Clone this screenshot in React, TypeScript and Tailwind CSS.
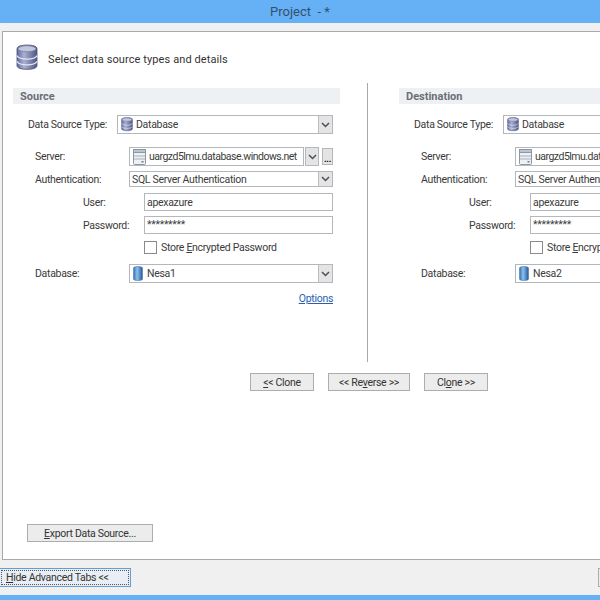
import React from "react";

const Stack = ({ size, className = "" }: { size: number; className?: string }) => (
  <svg width={size} height={size * 1.2} viewBox="0 0 22 25" preserveAspectRatio="none" className={className}>
    <defs>
      <linearGradient id="dbg" x1="0" x2="1" y1="0" y2="0">
        <stop offset="0" stopColor="#5f6aa0" />
        <stop offset="0.35" stopColor="#a9b0d2" />
        <stop offset="1" stopColor="#4d5688" />
      </linearGradient>
    </defs>
    <path d="M1 4.5C1 2 6 1 11 1s10 1 10 3.5v16c0 2.5-5 3.5-10 3.5S1 23 1 20.500z" fill="url(#dbg)" stroke="#4a5070" strokeWidth="0.8" />
    <ellipse cx="11" cy="4.500" rx="9" ry="2.800" fill="#c3c7da" stroke="#6d7398" strokeWidth="0.6" />
    <path d="M1 11c1.500 2.600 6 3.300 10 3.300s8.500-.7 10-3.300M1 16.500c1.500 2.600 6 3.300 10 3.300s8.500-.7 10-3.300" fill="none" stroke="#e4e6f0" strokeWidth="1.200" />
  </svg>
);

const ServerIcon = () => (
  <svg width="13" height="16" viewBox="0 0 13 16" className="shrink-0">
    <rect x="0.500" y="0.500" width="12" height="15" rx="1" fill="#eef1f4" stroke="#8b98a6" />
    <rect x="0.500" y="0.500" width="12" height="3" fill="#b9c4cf" stroke="#8b98a6" />
    <path d="M1 7h11M1 10h11" stroke="#a3afba" />
    <rect x="8.500" y="12" width="2" height="1.500" fill="#6c7c8c" />
  </svg>
);

const Cylinder = () => (
  <svg width="10" height="15" viewBox="0 0 10 15" className="shrink-0">
    <defs>
      <linearGradient id="cyl" x1="0" x2="1" y1="0" y2="0">
        <stop offset="0" stopColor="#2f6fb8" />
        <stop offset="0.4" stopColor="#8fc0ea" />
        <stop offset="1" stopColor="#1f5a9f" />
      </linearGradient>
    </defs>
    <path d="M0.500 2C0.500 1 2.500.5 5 .5s4.500.5 4.500 1.500v11c0 1-2 1.500-4.500 1.500S.5 14 .5 13z" fill="url(#cyl)" stroke="#3f6f9f" strokeWidth="0.500" />
  </svg>
);

const Chevron = () => (
  <svg width="9" height="6" viewBox="0 0 9 6">
    <path d="M1 1l3.500 3.500L8 1" fill="none" stroke="#4a4f55" strokeWidth="1.500" />
  </svg>
);

const Arrow = () => (
  <div className="w-[14px] self-stretch shrink-0 flex items-center justify-center bg-[#e4e4e4] border-l border-[#bcbcbc]">
    <Chevron />
  </div>
);

const Box = ({ className = "", children }: { className?: string; children?: React.ReactNode }) => (
  <div className={`flex items-center bg-white border border-[#b4b8bc] text-[#3c3c3c] overflow-hidden whitespace-nowrap ${className}`}>{children}</div>
);

const Label = ({ className = "", children }: { className?: string; children: React.ReactNode }) => (
  <span className={`shrink-0 text-[#3a3a3a] whitespace-nowrap ${className}`}>{children}</span>
);

const Panel = ({ title, db, width }: { title: string; db: string; width: string }) => (
  <div className={`${width} shrink-0 flex flex-col`}>
    <div className="h-[16px] w-full bg-[#eef0f3] pl-[7px] flex items-center font-bold text-[11px] text-[#6a6f76] tracking-[0px]">{title}</div>

    <div className="flex items-center w-full h-[19px] mt-[11px] pl-[15px]">
      <Label className="w-[89px]">Data Source Type:</Label>
      <Box className="w-[216px] h-full pl-[3px]">
        <Stack size={12} className="shrink-0" />
        <span className="ml-[3px] flex-1">Database</span>
        <Arrow />
      </Box>
    </div>

    <div className="flex items-center w-full h-[19px] mt-[13px] pl-[22px]">
      <Label className="w-[94px]">Server:</Label>
      <div className="flex items-center w-[190px] h-full gap-[1px]">
        <Box className="w-[175px] h-full pl-[3px]">
          <ServerIcon />
          <span className="ml-[3px] tracking-[-0.5px]">uargzd5lmu.database.windows.net</span>
        </Box>
        <div className="flex-1 h-full flex items-center justify-center bg-[#e4e4e4] border border-[#b4b8bc]">
          <Chevron />
        </div>
      </div>
      <div className="ml-[3px] w-[11px] h-[17px] flex items-end justify-center bg-[#e4e4e4] border border-[#b4b8bc] text-[9px] font-bold leading-[10px]">...</div>
    </div>

    <div className="flex items-center w-full h-[16px] mt-[5px] pl-[22px]">
      <Label className="w-[94px]">Authentication:</Label>
      <Box className="w-[204px] h-full pl-[2px]">
        <span className="flex-1">SQL Server Authentication</span>
        <Arrow />
      </Box>
    </div>

    <div className="flex items-center w-full h-[18px] mt-[6px] pl-[70px]">
      <Label className="w-[61px]">User:</Label>
      <Box className="w-[189px] h-full pl-[2px]">apexazure</Box>
    </div>

    <div className="flex items-center w-full h-[18px] mt-[5px] pl-[70px]">
      <Label className="w-[61px]">Password:</Label>
      <Box className="w-[189px] h-full pl-[2px] items-start pt-[1px]">*********</Box>
    </div>

    <div className="flex items-center w-full h-[13px] mt-[7px] pl-[131px]">
      <div className="w-[13px] h-[13px] bg-white border border-[#8a8a8a] shrink-0" />
      <Label className="ml-[4px]">Store <u>E</u>ncrypted Password</Label>
    </div>

    <div className="flex items-center w-full h-[19px] mt-[10px] pl-[22px]">
      <Label className="w-[94px]">Database:</Label>
      <Box className="w-[204px] h-full pl-[3px]">
        <Cylinder />
        <span className="ml-[4px] flex-1">{db}</span>
        <Arrow />
      </Box>
    </div>
  </div>
);

const Btn = ({ className = "", children }: { className?: string; children: React.ReactNode }) => (
  <div className={`flex items-center justify-center h-[18px] bg-[#ececec] border border-[#adadad] text-[#333] whitespace-nowrap ${className}`}>{children}</div>
);

export default function App() {
  return (
    <div className="w-[600px] h-[600px] overflow-hidden flex flex-col bg-[#f0f0f0] text-[10.5px] leading-[13px] font-['Roboto','Noto_Sans',sans-serif] tracking-[-0.3px]">
      <div className="h-[23px] mb-[1px] shrink-0 bg-[#66b0f6] flex items-center justify-center text-[13px] text-[#34516c] font-['Roboto',sans-serif] whitespace-pre tracking-[0px]">
        Project  - *
      </div>
      <div className="ml-[2px] mt-[7px] h-[529px] w-[620px] shrink-0 bg-white border border-[#a9a9a9] flex flex-col">
        <div className="flex items-center h-[26px] mt-[12px] pl-[13px]">
          <Stack size={22} />
          <span className="ml-[10px] mt-[5px] text-[11px] text-[#333] tracking-[0.1px]">Select data source types and details</span>
        </div>
        <div className="flex mt-[13px] h-[279px] pl-[10px]">
          <div className="pt-[5px]">
            <Panel title="Source" db="Nesa1" width="w-[327px]" />
            <div className="w-[320px] mt-[9px] text-right text-[#2a5db0] underline">Options</div>
          </div>
          <div className="ml-[27px] w-[1px] h-[279px] bg-[#a8a8a8] shrink-0" />
          <div className="ml-[31px] pt-[5px]">
            <Panel title="Destination" db="Nesa2" width="w-[327px]" />
          </div>
        </div>
        <div className="flex pl-[247px] mt-[11px]">
          <Btn className="w-[64px]"><span><u>&lt;</u>&lt; Clone</span></Btn>
          <Btn className="w-[82px] ml-[14px]"><span>&lt;&lt; Re<u>v</u>erse &gt;&gt;</span></Btn>
          <Btn className="w-[64px] ml-[14px]"><span>Cl<u>o</u>ne &gt;&gt;</span></Btn>
        </div>
        <div className="pl-[24px] mt-[133px]">
          <Btn className="w-[126px]"><span><u>E</u>xport Data Source...</span></Btn>
        </div>
      </div>
      <div className="flex-1 relative flex items-start justify-between pt-[8px]">
        <div className="ml-[-1px] w-[132px] h-[19px] bg-[#e8eef4] border border-[#5f9ed8] p-[1px]">
          <div className="h-full border border-dotted border-[#555] flex items-center pl-[4px] text-[#333]">
            <span><u>H</u>ide Advanced Tabs &lt;&lt;</span>
          </div>
        </div>
        <div className="w-[2px] h-[19px] bg-[#ececec] border-l border-y border-[#adadad]" />
      </div>
      <div className="h-[5px] shrink-0 bg-[#66b0f6]" />
    </div>
  );
}
